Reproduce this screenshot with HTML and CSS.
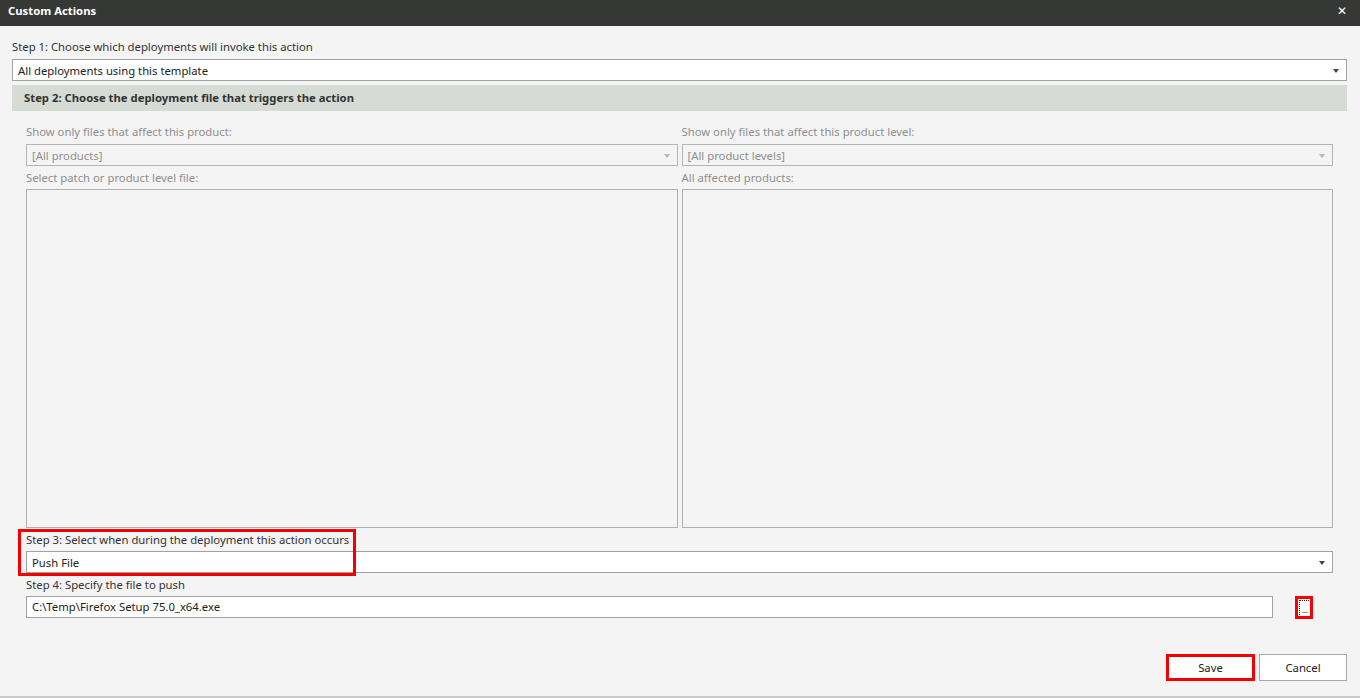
FILE: index.html
```html
<!DOCTYPE html>
<html>
<head>
<meta charset="utf-8">
<title>Custom Actions</title>
<link rel="stylesheet" href="styles.css">
</head>
<body>
<div class="dialog">
  <div class="titlebar">
    <span class="title">Custom Actions</span>
    <span class="close">&#x2715;</span>
  </div>
  <div class="content">
    <div class="label step1-label">Step 1: Choose which deployments will invoke this action</div>
    <div class="select">
      <span>All deployments using this template</span>
      <span class="arrow"></span>
    </div>
    <div class="step2-header">Step 2: Choose the deployment file that triggers the action</div>
    <div class="inner">
      <div class="columns">
        <div class="col">
          <div class="label disabled filter-label">Show only files that affect this product:</div>
          <div class="select disabled-select">
            <span>[All products]</span>
            <span class="arrow grey"></span>
          </div>
          <div class="label disabled list-label">Select patch or product level file:</div>
          <div class="listbox"></div>
        </div>
        <div class="col">
          <div class="label disabled filter-label">Show only files that affect this product level:</div>
          <div class="select disabled-select">
            <span>[All product levels]</span>
            <span class="arrow grey"></span>
          </div>
          <div class="label disabled list-label">All affected products:</div>
          <div class="listbox"></div>
        </div>
      </div>
      <div class="step3">
        <div class="label step3-label">Step 3: Select when during the deployment this action occurs</div>
        <div class="select">
          <span>Push File</span>
          <span class="arrow"></span>
        </div>
        <div class="highlight step3-highlight"></div>
      </div>
      <div class="label step4-label">Step 4: Specify the file to push</div>
      <div class="file-row">
        <div class="textbox">C:\Temp\Firefox Setup 75.0_x64.exe</div>
        <div class="browse-wrap">
          <div class="browse"><span class="dots">...</span></div>
        </div>
      </div>
    </div>
    <div class="buttons">
      <div class="btn save">Save</div>
      <div class="btn cancel">Cancel</div>
    </div>
  </div>
</div>
</body>
</html>
```
FILE: styles.css
```css
* { box-sizing: border-box; }
html, body {
  margin: 0;
  padding: 0;
  background: #f4f4f4;
}
body {
  font-family: "Noto Sans", "Open Sans", sans-serif;
  font-size: 11.3px;
  color: #222;
}
.dialog {
  width: 1360px;
  height: 698px;
  display: flex;
  flex-direction: column;
  border-bottom: 2px solid #c9c9c9;
}
.titlebar {
  height: 26px;
  background: #363835;
  color: #fff;
  display: flex;
  align-items: flex-start;
  justify-content: space-between;
  padding: 3px 13px 0 8px;
  flex-shrink: 0;
}
.title {
  font-weight: bold;
  font-size: 11.3px;
  line-height: 16px;
}
.close {
  font-size: 12px;
  line-height: 16px;
}
.content {
  flex: 1;
  padding: 13px 13px 0 12px;
  display: flex;
  flex-direction: column;
}
.label {
  height: 16px;
  line-height: 16px;
  white-space: nowrap;
  color: #333;
}
.label.disabled { color: #8f8f8f; }
.step1-label { margin-bottom: 4px; }
.select {
  height: 22px;
  background: #fff;
  border: 1px solid #a2a2a2;
  display: flex;
  align-items: center;
  justify-content: space-between;
  padding: 0 7px 0 5px;
  color: #222;
}
.disabled-select {
  background: #f4f4f4;
  border-color: #b4b4b4;
  color: #8f8f8f;
}
.arrow {
  width: 0;
  height: 0;
  border-left: 3.5px solid transparent;
  border-right: 3.5px solid transparent;
  border-top: 4px solid #444;
  margin-top: 2px;
}
.arrow.grey { border-top-color: #b8b8b8; }
.step2-header {
  margin-top: 4px;
  height: 26px;
  line-height: 26px;
  background: #d6dbd5;
  font-weight: bold;
  color: #333;
  padding-left: 12px;
}
.inner {
  padding: 13px 14px 0 14px;
  display: flex;
  flex-direction: column;
}
.columns {
  display: flex;
  gap: 4px;
}
.col {
  flex: 1;
  display: flex;
  flex-direction: column;
}
.filter-label { margin-bottom: 4px; }
.list-label { margin-top: 4px; margin-bottom: 3px; }
.listbox {
  height: 339px;
  border: 1px solid #b0b0b0;
  background: #f4f4f4;
}
.step3 {
  position: relative;
  margin-top: 4px;
}
.step3-label { margin-bottom: 3px; }
.highlight {
  position: absolute;
  border: 3px solid #f40000;
  pointer-events: none;
}
.step3-highlight {
  left: -8px;
  top: -3px;
  width: 338px;
  height: 47px;
}
.step4-label { margin-top: 4px; margin-bottom: 3px; }
.file-row {
  display: flex;
  align-items: flex-start;
}
.textbox {
  width: 1247px;
  height: 22px;
  background: #fff;
  border: 1px solid #a2a2a2;
  line-height: 20px;
  padding-left: 5px;
  color: #222;
}
.browse-wrap {
  margin-left: 22px;
  width: 18px;
  height: 23px;
  border: 3px solid #f40000;
  background: #fff;
  padding: 1px;
}
.browse {
  width: 100%;
  height: 100%;
  border-top: 1px dotted #222;
  border-left: 1px dotted #222;
  display: flex;
  align-items: flex-end;
  justify-content: center;
  overflow: hidden;
}
.dots {
  font-size: 9px;
  line-height: 9px;
  letter-spacing: -0.5px;
  color: #222;
  margin-bottom: 1px;
}
.buttons {
  margin-top: auto;
  margin-bottom: 15px;
  display: flex;
  justify-content: flex-end;
  gap: 4px;
}
.btn {
  width: 89px;
  height: 27px;
  background: #fff;
  display: flex;
  align-items: center;
  justify-content: center;
  color: #222;
}
.save { border: 3px solid #f40000; }
.cancel { border: 1px solid #a8a8a8; width: 88px; }
```
